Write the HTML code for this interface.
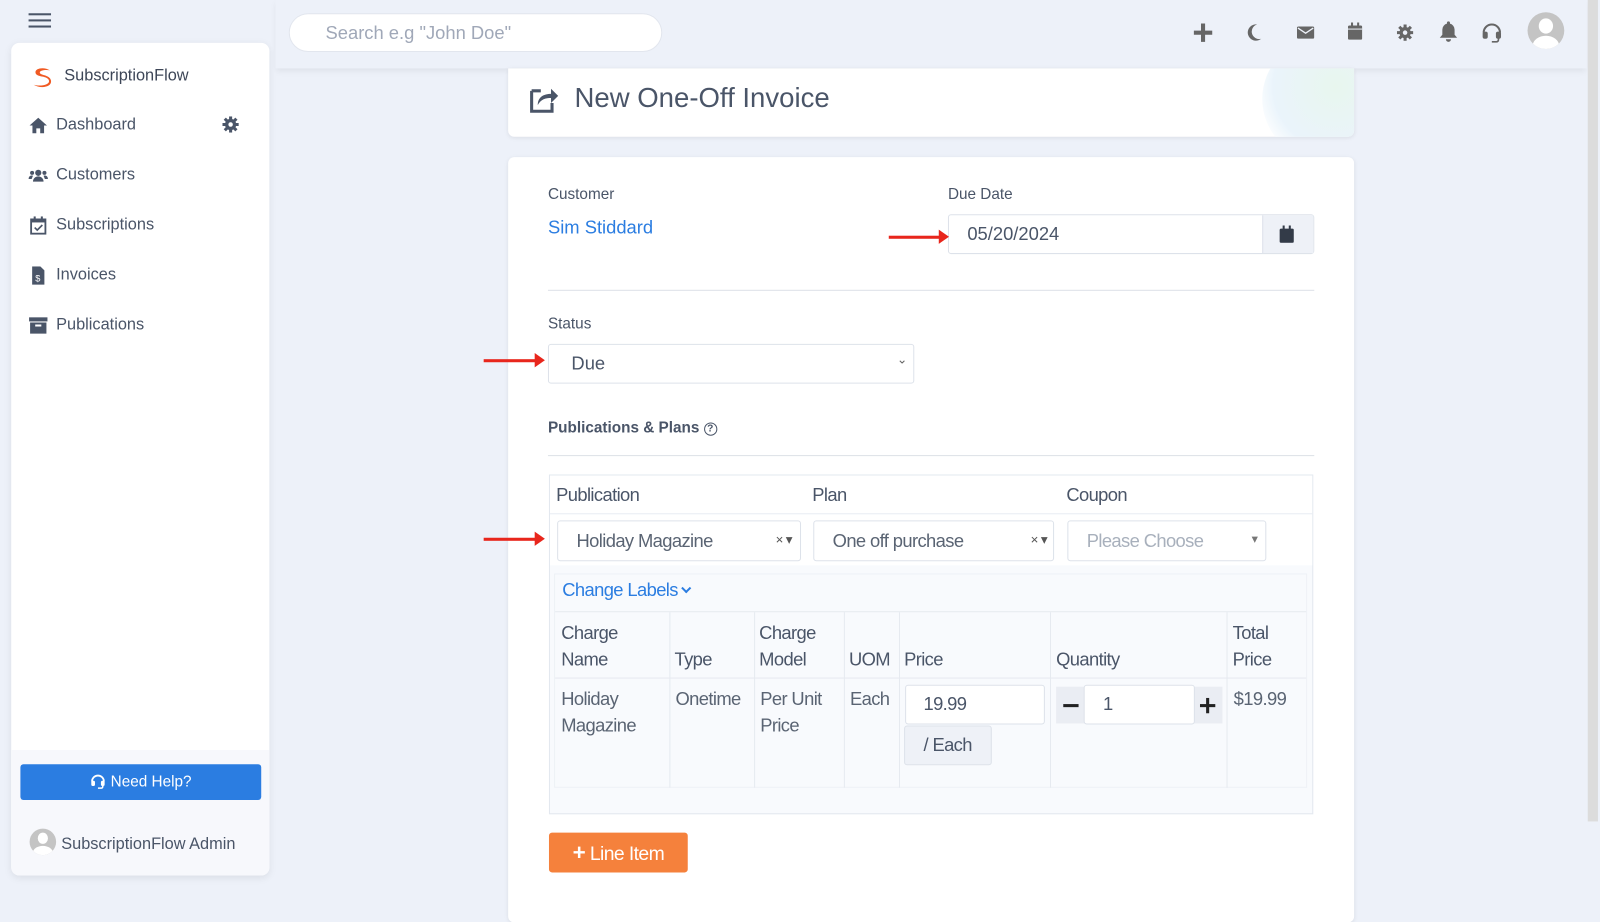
<!DOCTYPE html>
<html><head><meta charset="utf-8"><style>
*{box-sizing:border-box;margin:0;padding:0}
body{width:1600px;height:895px;overflow:hidden;background:#edf1f9;font-family:"Liberation Sans",sans-serif;color:#4a5568;position:relative}
#w{position:absolute;left:0;top:0;width:1568px;height:877px;transform:scale(1.0204);transform-origin:0 0}
.abs{position:absolute}
.n{font-family:"Liberation Sans Narrow","Liberation Sans",sans-serif;letter-spacing:-0.6px}
.side{left:11px;top:42px;width:253px;height:816px;background:#fff;border-radius:8px;box-shadow:0 2px 8px rgba(0,0,0,.08);overflow:hidden}
.nav{position:absolute;left:17px;font-size:16px;color:#4a5568;display:flex;align-items:center;gap:8px}
.nav svg{width:19px;height:18px;fill:#4a5568}
.top{left:270px;top:0;width:1285px;height:67px;background:#edf1f9;box-shadow:0 3px 6px rgba(0,0,0,.06)}
.card{background:#fff;border-radius:6px;box-shadow:0 1px 4px rgba(0,0,0,.08)}
.lbl{font-size:15px;color:#4a5568}
.inp{background:#fff;border:1px solid #dde2ea;border-radius:3px}
.arrow{position:absolute;height:3px;background:#e8261c}
.arrow:after{content:"";position:absolute;right:-8px;top:-6px;border-left:10px solid #e8261c;border-top:7.5px solid transparent;border-bottom:7.5px solid transparent}
.th{position:absolute;font-size:18px;color:#4a5568;line-height:26px}
.td{position:absolute;font-size:18px;color:#5a6473;line-height:26px}
</style></head><body><div id="w">
<div class="abs" style="left:28px;top:13px;width:22px;height:2px;background:#4a5568"></div>
<div class="abs" style="left:28px;top:19px;width:22px;height:2px;background:#4a5568"></div>
<div class="abs" style="left:28px;top:25px;width:22px;height:2px;background:#4a5568"></div>

<div class="abs top"></div>
<div class="abs" style="left:283px;top:13px;width:366px;height:38px;background:#fff;border:1px solid #e2e6ee;border-radius:20px;font-size:18px;color:#a0a8b8;padding:8px 0 0 35px">Search e.g "John Doe"</div>

<svg class="abs" style="left:1169px;top:22px" width="20" height="20" viewBox="0 0 20 20"><path d="M8 1h4v7h7v4h-7v7H8v-7H1V8h7z" fill="#666"/></svg>
<svg class="abs" style="left:1222px;top:23px" width="16" height="17" viewBox="0 0 16 17"><path d="M10 1A8 8 0 1 0 14 15 6.5 6.5 0 0 1 10 1z" fill="#666"/></svg>
<svg class="abs" style="left:1271px;top:26px" width="17" height="12" viewBox="0 0 17 12"><rect width="17" height="12" rx="1.5" fill="#666"/><path d="M1 1.5l7.5 5 7.5-5" stroke="#edf1f9" stroke-width="1.3" fill="none"/></svg>
<svg class="abs" style="left:1321px;top:22px" width="14" height="17" viewBox="0 0 14 17"><rect x="0" y="3" width="14" height="14" rx="1.5" fill="#666"/><rect x="3" y="0" width="2" height="5" fill="#666"/><rect x="9" y="0" width="2" height="5" fill="#666"/><rect x="0" y="6" width="14" height="1" fill="#edf1f9"/></svg>
<svg class="abs" style="left:1369px;top:24px" width="16" height="16" viewBox="0 0 16 16"><circle cx="8" cy="8" r="5.5" fill="#666"/><g stroke="#666" stroke-width="3"><path d="M8 0v16M0 8h16M2.3 2.3l11.4 11.4M13.7 2.3L2.3 13.7"/></g><circle cx="8" cy="8" r="2.2" fill="#edf1f9"/></svg>
<svg class="abs" style="left:1410px;top:20px" width="19" height="22" viewBox="0 0 19 22"><path d="M9.5 1a1.5 1.5 0 0 1 1.5 1.5v.7A6 6 0 0 1 15.5 9v5l2.5 3H1l2.5-3V9A6 6 0 0 1 8 3.2v-.7A1.5 1.5 0 0 1 9.5 1zM7 18.5h5a2.5 2.5 0 0 1-5 0z" fill="#666"/></svg>
<svg class="abs" style="left:1451px;top:20px" width="22" height="23" viewBox="0 0 22 23"><path d="M3 12a8 8 0 0 1 16 0" stroke="#666" stroke-width="2" fill="none"/><rect x="2" y="11" width="5" height="7" rx="2" fill="#666"/><rect x="15" y="11" width="5" height="7" rx="2" fill="#666"/><path d="M17.5 17v2a2 2 0 0 1-2 2H11" stroke="#666" stroke-width="1.6" fill="none"/></svg>
<div class="abs" style="left:1497px;top:12px;width:36px;height:36px;border-radius:50%;background:#c4c4c4;overflow:hidden"><div class="abs" style="left:11px;top:6px;width:14px;height:15px;border-radius:50%;background:#fff"></div><div class="abs" style="left:5px;top:23px;width:26px;height:20px;border-radius:50%;background:#fff"></div></div>
<div class="abs" style="left:1556px;top:0;width:10px;height:805px;background:#dcdcdc"></div>

<div class="abs side">
 <svg class="abs" style="left:18px;top:24px" width="26" height="20" viewBox="0 0 26 20"><path d="M20 3C14 -1 4 1 6 6c2 4 12 2 13 7 1 4-8 6-15 4 6 4 18 3 17-4C20 7 10 8 10 5c0-2 6-3 10-2z" fill="#f05a23"/></svg>
 <div class="abs" style="left:52px;top:24px;font-size:16px;color:#3d4657">SubscriptionFlow</div>
 <div class="nav" style="top:72px"><svg viewBox="0 0 20 18"><path d="M10 1l9 8h-3v8h-4v-5H8v5H4V9H1z"/></svg>Dashboard</div>
 <svg class="abs" style="left:207px;top:72px" width="16" height="16" viewBox="0 0 16 16"><circle cx="8" cy="8" r="5.5" fill="#4a5568"/><g stroke="#4a5568" stroke-width="3"><path d="M8 0v16M0 8h16M2.3 2.3l11.4 11.4M13.7 2.3L2.3 13.7"/></g><circle cx="8" cy="8" r="2.2" fill="#fff"/></svg>
 <div class="nav" style="top:121px"><svg viewBox="0 0 22 18"><circle cx="11" cy="6" r="3.5"/><path d="M5 16c0-4 3-6 6-6s6 2 6 6z"/><circle cx="4" cy="6" r="2.3"/><circle cx="18" cy="6" r="2.3"/><path d="M0 13c0-3 2-4 4-4l1 .3L3.5 13zM22 13c0-3-2-4-4-4l-1 .3 1.5 3.7z"/></svg>Customers</div>
 <div class="nav" style="top:170px"><svg viewBox="0 0 18 18"><path d="M2 3h14v14H2z" fill="none" stroke="#4a5568" stroke-width="1.8"/><rect x="2" y="3" width="14" height="3"/><rect x="4.5" y="0" width="2" height="4"/><rect x="11.5" y="0" width="2" height="4"/><path d="M5.5 11l2.5 2.5 5-5" stroke="#4a5568" stroke-width="1.6" fill="none"/></svg>Subscriptions</div>
 <div class="nav" style="top:219px"><svg viewBox="0 0 18 18"><path d="M3 0h8l4 4v14H3z"/><text x="6" y="15" font-size="9" fill="#fff" font-family="Liberation Sans">$</text></svg>Invoices</div>
 <div class="nav" style="top:268px"><svg viewBox="0 0 18 18"><rect x="0" y="1" width="18" height="4"/><path d="M1 6h16v11H1z"/><rect x="6" y="8" width="6" height="2" fill="#fff"/></svg>Publications</div>
 <div class="abs" style="left:0;top:693px;width:253px;height:123px;background:#f7f8fc"></div>
 <div class="abs" style="left:9px;top:707px;width:236px;height:35px;background:#2b7de1;border-radius:3px;color:#fff;font-size:15px;text-align:center;line-height:35px">
  <svg style="vertical-align:-3px" width="16" height="17" viewBox="0 0 22 23"><path d="M3 12a8 8 0 0 1 16 0" stroke="#fff" stroke-width="2.4" fill="none"/><rect x="2" y="11" width="5" height="7" rx="2" fill="#fff"/><rect x="15" y="11" width="5" height="7" rx="2" fill="#fff"/><path d="M17.5 17v2a2 2 0 0 1-2 2H11" stroke="#fff" stroke-width="2" fill="none"/></svg> Need Help?</div>
 <div class="abs" style="left:18px;top:770px;width:26px;height:26px;border-radius:50%;background:#c4c4c4;overflow:hidden"><div class="abs" style="left:8px;top:4px;width:10px;height:11px;border-radius:50%;background:#fff"></div><div class="abs" style="left:3px;top:17px;width:20px;height:14px;border-radius:50%;background:#fff"></div></div>
 <div class="abs" style="left:49px;top:777px;font-size:16px;color:#4a5568">SubscriptionFlow Admin</div>
</div>

<div class="abs card" style="left:498px;top:67px;width:829px;height:67px;border-radius:0 0 6px 6px;overflow:hidden">
 <div class="abs" style="right:-30px;top:-30px;width:120px;height:120px;border-radius:50%;background:radial-gradient(circle at 60% 40%,#e8f6ee,#eaf4fb 60%,#fff 80%)"></div>
 <svg class="abs" style="left:21px;top:17px" width="29" height="27" viewBox="0 0 29 27"><path d="M2 5h9M2 5v20h20v-8" stroke="#4a5568" stroke-width="3" fill="none"/><path d="M8 19c0-8 6-11 13-11V3l7 7-7 7v-5c-5 0-10 1-13 7z" fill="#4a5568"/></svg>
 <div class="abs" style="left:65px;top:14px;font-size:27px;color:#4a5568">New One-Off Invoice</div>
</div>

<div class="abs card" style="left:498px;top:154px;width:829px;height:750px">
 <div class="abs lbl" style="left:39px;top:28px">Customer</div>
 <div class="abs" style="left:39px;top:59px;font-size:18px;color:#2b7de1">Sim Stiddard</div>
 <div class="abs lbl" style="left:431px;top:28px">Due Date</div>
 <div class="abs inp" style="left:431px;top:56px;width:359px;height:39px;font-size:18px;color:#4a5568;padding:8px 0 0 18px">05/20/2024</div>
 <div class="abs" style="left:739px;top:57px;width:50px;height:37px;background:#eef1f7;border-left:1px solid #dde2ea"></div>
 <svg class="abs" style="left:756px;top:67px" width="14" height="17" viewBox="0 0 14 17"><rect x="0" y="3" width="14" height="14" rx="1.5" fill="#333b48"/><rect x="3" y="0" width="2" height="5" fill="#333b48"/><rect x="9" y="0" width="2" height="5" fill="#333b48"/></svg>
 <div class="abs" style="left:39px;top:130px;width:751px;height:1px;background:#dde1e7"></div>
 <div class="abs lbl" style="left:39px;top:155px">Status</div>
 <div class="abs inp" style="left:39px;top:183px;width:359px;height:39px;font-size:18px;padding:8px 0 0 22px">Due<span style="position:absolute;right:6px;top:7px;font-size:12px;color:#666">&#8964;</span></div>
 <div class="abs" style="left:39px;top:257px;font-size:15px;font-weight:bold;color:#4a5568">Publications &amp; Plans <span style="display:inline-block;width:13px;height:13px;border:1.3px solid #4a5568;border-radius:50%;font-size:10px;text-align:center;line-height:11px;vertical-align:1px">?</span></div>
 <div class="abs" style="left:39px;top:292px;width:751px;height:1px;background:#dde1e7"></div>

 <div class="abs n" style="left:40px;top:311px;width:749px;height:333px;border:1px solid #e3e8ef;background:#f8fafd">
  <div class="abs" style="left:0;top:0;width:747px;height:88px;background:#fff"></div>
  <div class="th" style="left:6px;top:6px">Publication</div>
  <div class="th" style="left:257px;top:6px">Plan</div>
  <div class="th" style="left:506px;top:6px">Coupon</div>
  <div class="abs" style="left:0;top:37px;width:747px;height:1px;background:#e8ecf2"></div>
  <div class="abs inp" style="left:7px;top:44px;width:239px;height:40px;font-size:18px;padding:9px 0 0 18px;color:#5a6473">Holiday Magazine<span style="position:absolute;right:8px;top:10px;font-size:13px;color:#555">× ▾</span></div>
  <div class="abs inp" style="left:258px;top:44px;width:236px;height:40px;font-size:18px;padding:9px 0 0 18px;color:#5a6473">One off purchase<span style="position:absolute;right:6px;top:10px;font-size:13px;color:#555">× ▾</span></div>
  <div class="abs inp" style="left:507px;top:44px;width:195px;height:40px;font-size:18px;padding:9px 0 0 18px;color:#a8b0bc">Please Choose<span style="position:absolute;right:8px;top:10px;font-size:12px;color:#777">▾</span></div>
  <div class="abs" style="left:4px;top:96px;width:738px;height:210px;border:1px solid #eef1f6"></div>
  <div class="abs" style="left:12px;top:102px;font-size:18px;color:#2b7de1">Change Labels <span style="display:inline-block;width:7px;height:7px;border-right:2px solid #2b7de1;border-bottom:2px solid #2b7de1;transform:rotate(45deg);vertical-align:4px"></span></div>
  <div class="abs" style="left:5px;top:133px;width:736px;height:1px;background:#e6eaf0"></div>
  <div class="abs" style="left:5px;top:198px;width:736px;height:1px;background:#e6eaf0"></div>
  <div class="abs" style="left:117px;top:134px;width:1px;height:172px;background:#e6eaf0"></div>
  <div class="abs" style="left:200px;top:134px;width:1px;height:172px;background:#e6eaf0"></div>
  <div class="abs" style="left:288px;top:134px;width:1px;height:172px;background:#e6eaf0"></div>
  <div class="abs" style="left:342px;top:134px;width:1px;height:172px;background:#e6eaf0"></div>
  <div class="abs" style="left:490px;top:134px;width:1px;height:172px;background:#e6eaf0"></div>
  <div class="abs" style="left:663px;top:134px;width:1px;height:172px;background:#e6eaf0"></div>
  <div class="th" style="left:11px;top:141px">Charge<br>Name</div>
  <div class="th" style="left:122px;top:167px">Type</div>
  <div class="th" style="left:205px;top:141px">Charge<br>Model</div>
  <div class="th" style="left:293px;top:167px">UOM</div>
  <div class="th" style="left:347px;top:167px">Price</div>
  <div class="th" style="left:496px;top:167px">Quantity</div>
  <div class="th" style="left:669px;top:141px">Total<br>Price</div>
  <div class="td" style="left:11px;top:206px">Holiday<br>Magazine</div>
  <div class="td" style="left:123px;top:206px">Onetime</div>
  <div class="td" style="left:206px;top:206px">Per Unit<br>Price</div>
  <div class="td" style="left:294px;top:206px">Each</div>
  <div class="abs inp" style="left:348px;top:205px;width:137px;height:39px;font-size:18px;padding:8px 0 0 17px;color:#4a5568">19.99</div>
  <div class="abs" style="left:347px;top:245px;width:86px;height:39px;background:#eef1f7;border:1px solid #dde2ea;border-radius:3px;font-size:18px;padding:8px 0 0 18px;color:#4a5568">/ Each</div>
  <div class="abs" style="left:496px;top:207px;width:163px;height:36px;background:#eaedf3"></div>
  <div class="abs" style="left:503px;top:224px;width:15px;height:3px;background:#222"></div>
  <div class="abs inp" style="left:523px;top:205px;width:109px;height:39px;font-size:18px;padding:8px 0 0 18px;color:#4a5568">1</div>
  <div class="abs" style="left:637px;top:224px;width:15px;height:3px;background:#222"></div>
  <div class="abs" style="left:643px;top:218px;width:3px;height:15px;background:#222"></div>
  <div class="td" style="left:670px;top:206px">$19.99</div>
 </div>
 <div class="abs n" style="left:40px;top:662px;width:136px;height:39px;background:#f5813c;border-radius:3px;color:#fff;font-size:19px;line-height:39px;text-align:center"><b style="font-size:22px">+</b> Line Item</div>
</div>

<div class="arrow" style="left:871px;top:231px;width:51px"></div>
<div class="arrow" style="left:474px;top:352px;width:52px"></div>
<div class="arrow" style="left:474px;top:527px;width:52px"></div>
</div></body></html>
